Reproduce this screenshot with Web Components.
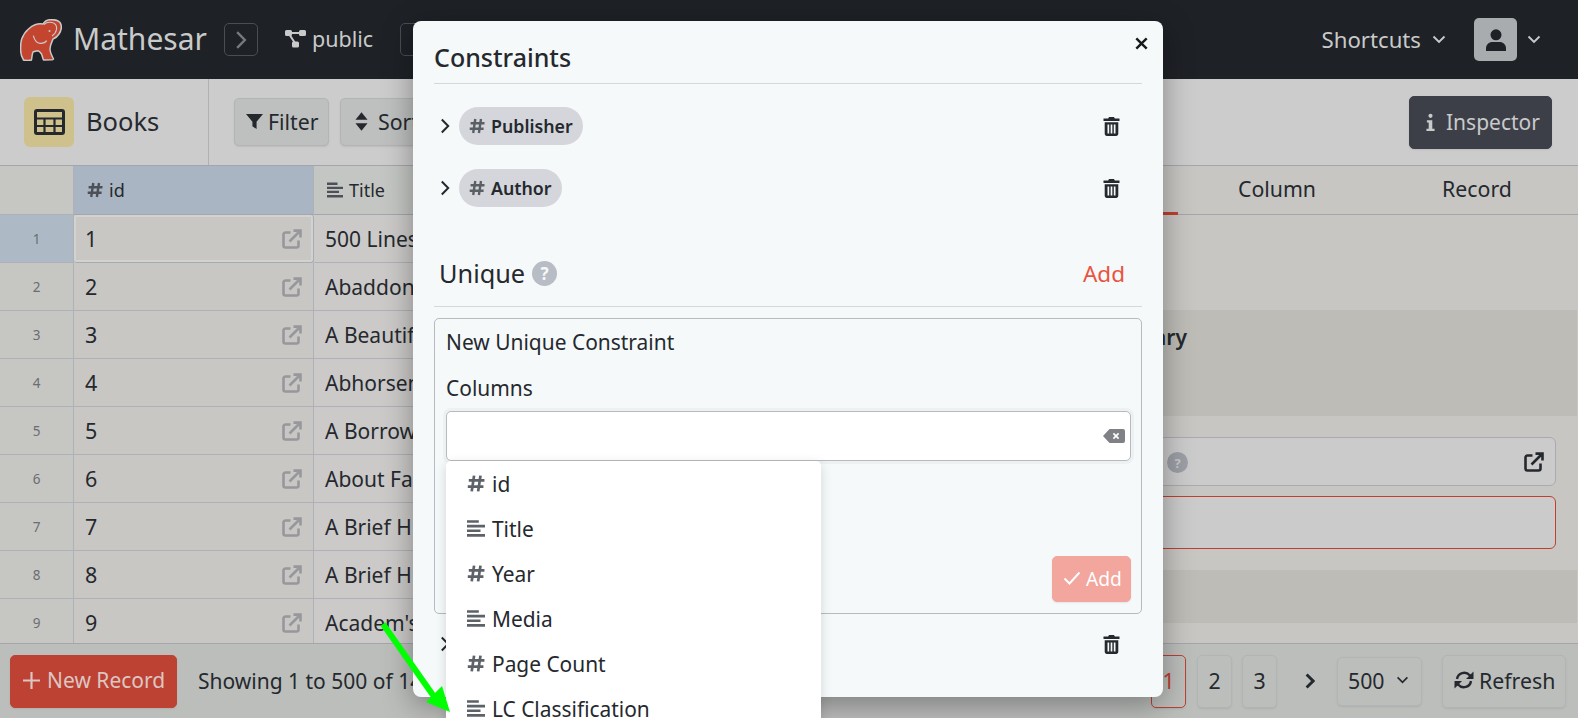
<!DOCTYPE html>
<html><head><meta charset="utf-8"><title>Mathesar</title>
<style>
html,body{margin:0;padding:0;width:1578px;height:718px;overflow:hidden}
body{font-family:"Noto Sans",sans-serif;color:#25292e;position:relative}
m-app{display:flex}
</style></head><body>
<m-app></m-app>
<script>
const ICONS={
hash:['0 0 16 16','<path d="M6.3 1 4.2 15M12 1 9.900 15M1.600 5.200H15.500M.7 10.800h13.900" fill="none" stroke="currentColor" stroke-width="2.400"/>'],
lines:['0 0 16 16','<path d="M0 .6h10.500v2.300H0zM0 4.700h16v2.300H0zM0 8.800h12v2.300H0zM0 12.900h16v2.500H0z" fill="currentColor"/>'],
chevR:['0 0 10 16','<path d="M1.800 1.500 8.200 8l-6.400 6.500" fill="none" stroke="currentColor" stroke-width="2"/>'],
chevB:['0 0 10 16','<path d="M1.600 1.500 8.100 8l-6.500 6.500" fill="none" stroke="currentColor" stroke-width="2.900"/>'],
chevD:['0 0 14 9','<path d="M1.500 1.500 7 7l5.500-5.500" fill="none" stroke="currentColor" stroke-width="1.900"/>'],
trash:['0 0 16 19','<path fill="currentColor" fill-rule="evenodd" d="M5.500 0h5l.8 1.600H16v2.400H0V1.600h4.700zM1.200 5.200h13.600v11.600c0 1.200-.9 2.200-2.100 2.200H3.300c-1.200 0-2.100-1-2.100-2.200zM4 7.500v9h1.700v-9zM7.150 7.500v9h1.700v-9zM10.300 7.500v9H12v-9z"/>'],
ext:['0 0 20 20','<path d="M8.500 3.500H3.400A1.900 1.900 0 0 0 1.500 5.400v11.200a1.900 1.900 0 0 0 1.900 1.900h11.200a1.900 1.900 0 0 0 1.900-1.900v-5" fill="none" stroke="currentColor" stroke-width="2.600"/><path d="M7.500 12.500 17 3M11.500 1.600h7v7" fill="none" stroke="currentColor" stroke-width="2.600"/>'],
filter:['0 0 18 18','<path d="M0 1h18l-6.800 8.200V17L6.800 14V9.200z" fill="currentColor"/>'],
sort:['0 0 14 20','<path d="M7 0l6.500 8H.5zM7 20l6.500-8H.5z" fill="currentColor"/>'],
info:['0 0 10 20','<circle cx="5" cy="2.600" r="2.300" fill="currentColor"/><path d="M1 7.500h6v9.500h2.500v2.500H.5V17H3v-7H1z" fill="currentColor"/>'],
refresh:['0 0 20 20','<path d="M3 9a7.300 7.300 0 0 1 12.700-3.800L18 7.500M17 11a7.300 7.300 0 0 1-12.700 3.800L2 12.500" fill="none" stroke="currentColor" stroke-width="2.400"/><path d="M19.500 1.500v7.500H12zM.5 18.500V11H8z" fill="currentColor"/>'],
back:['0 0 22 14','<path fill="currentColor" fill-rule="evenodd" d="M6.500 0H20a2 2 0 0 1 2 2v10a2 2 0 0 1-2 2H6.500L0 7zM11 3.800 9.800 5l2 2-2 2 1.200 1.200 2-2 2 2 1.200-1.200-2-2 2-2L15 3.800l-2 2z"/>'],
table:['0 0 31 26','<rect x="1.500" y="1.500" width="28" height="23" rx="1.500" fill="none" stroke="currentColor" stroke-width="3"/><path d="M1 9.500h29M1 17h29M10.500 9.500V25M20.500 9.500V25" fill="none" stroke="currentColor" stroke-width="2.200"/>'],
user:['0 0 20 22','<circle cx="10" cy="5.800" r="5.500" fill="currentColor"/><path d="M0 22v-2.500C0 15.500 3 13 6.500 13h7c3.500 0 6.500 2.500 6.500 6.500V22z" fill="currentColor"/>'],
schema:['0 0 21 18','<path d="M0 1.500A1.500 1.500 0 0 1 1.500 0h4A1.500 1.500 0 0 1 7 1.500v3A1.500 1.500 0 0 1 5.500 6h-4A1.500 1.500 0 0 1 0 4.500zM14 1.500A1.500 1.500 0 0 1 15.500 0h4A1.500 1.500 0 0 1 21 1.500v3A1.500 1.500 0 0 1 19.500 6h-4A1.500 1.500 0 0 1 14 4.500zM7 13A1.500 1.500 0 0 1 8.500 11.500h4A1.500 1.500 0 0 1 14 13v3a1.500 1.500 0 0 1-1.500 1.500h-4A1.500 1.500 0 0 1 7 16z" fill="currentColor"/><path d="M5 3h11M4 4l6 9" fill="none" stroke="currentColor" stroke-width="2"/>'],
check:['0 0 18 14','<path d="M1.500 7.500 6.500 12.500 16.500 1.500" fill="none" stroke="currentColor" stroke-width="2"/>'],
plus:['0 0 18 18','<path d="M9 0v18M0 9h18" fill="none" stroke="currentColor" stroke-width="2.300"/>'],
close:['0 0 12 12','<path d="M1.200 1.200 10.800 10.800M10.800 1.200 1.200 10.800" fill="none" stroke="currentColor" stroke-width="2.200"/>']
};
function el(name,html){customElements.define(name,class extends HTMLElement{constructor(){super();this.attachShadow({mode:'open'}).innerHTML=html;}});}
customElements.define('m-icon',class extends HTMLElement{
 constructor(){super();this.attachShadow({mode:'open'});}
 connectedCallback(){const[vb,body]=ICONS[this.getAttribute('name')];const w=this.getAttribute('w')||16,h=this.getAttribute('h')||16;
 this.shadowRoot.innerHTML=`<style>:host{display:inline-flex;flex:none;line-height:0}svg{display:block}</style><svg xmlns="http://www.w3.org/2000/svg" width="${w}" height="${h}" viewBox="${vb}">${body}</svg>`;}
});

el('m-btn',`<style>:host{display:inline-flex;align-items:center;box-sizing:border-box;height:var(--h,48px);border:1px solid var(--b,#b2b4b5);border-radius:5px;background:var(--bg,#bebfbf);color:var(--c,#25292e);padding:0 var(--p,10px) var(--pb,2px);gap:var(--g,5px);font-size:var(--fs,21.300px);box-shadow:0 1px 2px rgba(0,0,0,.08);flex:none;white-space:nowrap}</style><slot></slot>`);

el('m-header',`<style>
:host{display:flex;align-items:center;height:79px;background:#1e2126;color:#c9caca;flex:none;padding:0 37px 0 20px;box-sizing:border-box}
.name{font-size:30px;margin:-2px 0 0 11px;line-height:1}
.box{display:flex;align-items:center;justify-content:center;box-sizing:border-box;width:34px;height:33px;border:1px solid #4a4d52;border-radius:5px;margin-left:17px;color:#77797d}
.sch{display:flex;align-items:center;margin:-2px 0 0 27px;font-size:21.500px;gap:6px}
.box2{width:34px;height:33px;box-sizing:border-box;border:1px solid #4a4d52;border-radius:5px;margin-left:27px}
.sp{flex:1}
.sc{font-size:22.200px;margin-top:0}
.cd{margin-left:11px}
.cd2{margin-left:10px}
.av{width:43px;height:43px;border-radius:5px;background:#a9acaf;color:#1e2126;display:flex;align-items:center;justify-content:center;margin-left:28px}
</style>
<svg width="42" height="42" viewBox="0 0 42 42" xmlns="http://www.w3.org/2000/svg"><path d="M15 5.700C18 4.700 21 4.700 23 5C25 2 27.500.7 30 .7C34 .5 38 .8 40 3.500C42 6.500 41.500 11 39 15C37.500 17.500 35.500 19 33 20C32 23 30 26 30 30C30 33.500 32 37 33.500 40C33.500 41 30 41 23.500 41C22.500 39 22.500 37 21.500 35C20.500 33.500 19.500 32.500 18 31.700C16 32.200 14.500 32.500 13 33C12 35 12 38 11.500 41C10 41.500 5 41.500 3.500 41C1.500 38 .7 35 .7 31.700C.5 27 .7 23 1.700 20C3.500 15.500 5.500 12.500 8.500 10C10.500 8 12.500 6.500 15 5.700Z" fill="#c4452f" stroke="#c9c9c9" stroke-width="1.500" stroke-linejoin="round"/><path d="M24 5.500C26 3.500 29 2.800 32 3.500C35.500 4.300 37 7 36.500 10.500C36 13 34.500 15.500 32 17" fill="none" stroke="#c9c9c9" stroke-width="1.100"/><path d="M13.300 16.700C14.500 21 17 24.300 20 24.300C23 24.500 25.500 23.500 26.700 21.700" fill="none" stroke="#c9c9c9" stroke-width="1.200"/><circle cx="29.500" cy="12" r="1" fill="#c9c9c9"/></svg>
<span class="name">Mathesar</span>
<span class="box"><m-icon name="chevR" w="12" h="20"></m-icon></span>
<span class="sch"><m-icon name="schema" w="21" h="18"></m-icon>public</span>
<span class="box2"></span>
<span class="sp"></span>
<span class="sc">Shortcuts</span><m-icon class="cd" name="chevD" w="14" h="9"></m-icon>
<span class="av"><m-icon name="user" w="20" h="22"></m-icon></span><m-icon class="cd2" name="chevD" w="14" h="9"></m-icon>`);

el('m-toolbar',`<style>
:host{display:flex;align-items:center;height:87px;box-sizing:border-box;background:#cccccc;border-bottom:1px solid #a4a6ab;flex:none;padding-right:26px}
.t{display:flex;align-items:center;width:209px;height:100%;box-sizing:border-box;border-right:1px solid #b0b1b3;padding-left:24px;flex:none}
.tile{width:50px;height:50px;border-radius:6px;background:#cfc18c;color:#25292e;display:flex;align-items:center;justify-content:center}
.n{font-size:25.500px;margin-left:12px;margin-top:-2px}
.bs{display:flex;gap:11px;margin-left:25px}
.f{--p:11px;width:95px}
.s{--p:14px;--g:10px}
.sp{flex:1}
.ins{--bg:#3c3f48;--b:#3c3f48;--c:#c9caca;--h:53px;--p:16px;--g:11px;--fs:21px;--pb:0px;width:143px}
</style>
<div class="t"><span class="tile"><m-icon name="table" w="31" h="26"></m-icon></span><span class="n">Books</span></div>
<div class="bs"><m-btn class="f"><m-icon name="filter" w="17" h="17"></m-icon>Filter</m-btn><m-btn class="s"><m-icon name="sort" w="13" h="19"></m-icon>Sort</m-btn></div>
<span class="sp"></span>
<m-btn class="ins"><m-icon name="info" w="9" h="19"></m-icon>Inspector</m-btn>`);

const titles=['500 Lines','Abaddon','A Beautiful','Abhorsen','A Borrowed','About Face','A Brief H','A Brief H',"Academ's"];
el('m-sheet',`<style>
:host{display:grid;grid-template-columns:74px 240px 1fr;grid-template-rows:49px repeat(9,48px);width:978px;flex:none;background:#c9c8c5;font-size:21.500px;overflow:hidden}
.h{background:#c4c6c4;border-right:1px solid #aeb2b8;border-bottom:1px solid #a4a6ab;display:flex;align-items:center;padding-left:13px;font-size:18px;gap:6px;box-sizing:border-box}
.h.n{padding:0}
.h.id{background:#a9b5c2}
.h m-icon{color:#4d5157}
.n{display:flex;align-items:center;justify-content:center;font-size:13.500px;color:#6a6d73;border-right:1px solid #aeb2b8;border-bottom:1px solid #aeb2b8;box-sizing:border-box;background:#c6c6c3}
.n.sel{background:#adbac5}
.c{display:flex;align-items:center;justify-content:space-between;padding:0 11px 0 11px;box-sizing:border-box;border-right:1px solid #aeb2b8;border-bottom:1px solid #aeb2b8;background:#c9c7c4;min-width:0}
.c.sel{box-shadow:inset 0 0 0 2px #d2d2d0;border-radius:3px;border-color:#a8abb0}
.c m-icon{color:#96989c}
.t{display:flex;align-items:center;padding-left:11px;box-sizing:border-box;border-bottom:1px solid #aeb2b8;background:#cbcac8;font-size:21px;white-space:nowrap}
</style>
<div class="h n"></div><div class="h id"><m-icon name="hash" w="16" h="16"></m-icon>id</div><div class="h"><m-icon name="lines" w="16" h="16"></m-icon>Title</div>
${titles.map((t,i)=>`<div class="n${i?'':' sel'}">${i+1}</div><div class="c${i?'':' sel'}"><span>${i+1}</span><m-icon name="ext" w="20" h="20"></m-icon></div><div class="t">${t}</div>`).join('')}`);

el('m-inspector',`<style>
:host{display:flex;flex-direction:column;width:600px;flex:none;background:#c7c6c3;overflow:hidden;box-sizing:border-box;border-left:1px solid #aeb2b8}
.tabs{display:flex;height:49px;box-sizing:border-box;border-bottom:1px solid #a4a6ab;flex:none}
.tab{width:200px;display:flex;align-items:center;justify-content:center;font-size:21.300px;box-sizing:border-box;padding:0 2px 4px 0}
.tab.on{width:199px;height:49px;padding:0;border-bottom:3px solid #c0402f}
.band{background:#bdbcb7;margin-right:1px;flex:none}
.b1{height:106px;margin-top:95px;padding:13px 390px 0 0;font-size:21px;font-weight:600;box-sizing:border-box;text-align:right}
.f{box-sizing:border-box;margin-right:22px;margin-left:16px;background:#cbcbcb;border:1px solid #a9abaf;border-radius:6px;flex:none;display:flex;align-items:center;justify-content:flex-end}
.f1{height:49px;margin-top:21px;padding-right:11px;position:relative}
.q{position:absolute;left:171px;top:14px;width:21px;height:21px;border-radius:50%;background:#9c9fa6;color:#c9c9c9;font-size:13px;font-weight:700;display:flex;align-items:center;justify-content:center}
.f2{height:53px;margin-top:10px;border-color:#c0402f}
.b2{height:53px;margin-top:21px}
</style>
<div class="tabs"><div class="tab on"></div><div class="tab">Column</div><div class="tab">Record</div></div>
<div class="band b1">Summary</div>
<div class="f f1"><span class="q">?</span><m-icon name="ext" w="20" h="20"></m-icon></div>
<div class="f f2"></div>
<div class="band b2"></div>`);

el('m-footer',`<style>
:host{display:flex;align-items:center;height:75px;box-sizing:border-box;border-top:1px solid #a4a6ab;background:#bcbebc;padding:0 12px 0 10px;font-size:21.300px;flex:none}
m-btn{--bg:transparent;--h:53px}
.new{--bg:#bd4233;--b:#bd4233;--c:#dcc6c2;--p:12px;--g:7px;--fs:21px;width:167px}
.s{margin:0 0 0 21px;font-size:21px;white-space:nowrap}
.sp{flex:1}
.p{--h:53px;--p:0;width:35px;justify-content:center}
.p.on{border-color:#c0402f;color:#c0402f;margin-right:11px}
.p3{margin-left:10px}
.ch{margin:0 22px 0 28px}
.sel{--h:49px;--p:10px;--g:11px;width:85px}
.re{--p:11px;--g:5px;margin-left:20px;width:124px}
</style>
<m-btn class="new"><m-icon name="plus" w="17" h="17"></m-icon>New Record</m-btn><span class="s">Showing 1 to 500 of 14</span>
<span class="sp"></span>
<m-btn class="p on">1</m-btn><m-btn class="p">2</m-btn><m-btn class="p p3">3</m-btn><m-icon class="ch" name="chevB" w="10" h="16"></m-icon>
<m-btn class="sel">500<m-icon name="chevD" w="13" h="8"></m-icon></m-btn>
<m-btn class="re"><m-icon name="refresh" w="20" h="20"></m-icon>Refresh</m-btn>`);

el('m-chip-row',`<style>
:host{display:flex;align-items:center;height:38px;padding:0 22px 0 6px}
.c{color:#25292e;display:flex}
.chip{display:inline-flex;align-items:center;height:38px;border-radius:19px;background:#d4d6db;padding:0 10px 0 10px;gap:6px;margin-left:9px;font-weight:600;font-size:17.800px}
.chip m-icon{color:#5a5f66}
.sp{flex:1}
</style><span class="c"><m-icon name="chevR" w="10" h="16"></m-icon></span><span class="chip"><m-icon name="hash" w="16" h="16"></m-icon><slot></slot></span><span class="sp"></span><m-icon name="trash" w="17" h="19"></m-icon>`);

customElements.define('m-option',class extends HTMLElement{
 constructor(){super();this.attachShadow({mode:'open'});}
 connectedCallback(){this.shadowRoot.innerHTML=`<style>
:host{display:flex;align-items:center;height:45px;padding-left:21px;gap:7px;font-size:20.900px;color:#25292e;white-space:nowrap}
m-icon{color:#5d6168}
</style><m-icon name="${this.getAttribute('icon')}" w="18" h="19"></m-icon><slot></slot>`;}
});

el('m-modal',`<style>
:host{position:absolute;left:413px;top:21px;width:750px;height:676px;background:#f5f9fa;border-radius:8px;box-shadow:0 8px 30px rgba(0,0,0,.35);box-sizing:border-box;padding:0 21px;display:flex;flex-direction:column;z-index:2}
.x{position:absolute;right:15px;top:16px;color:#17191c;display:flex}
h2{margin:0;font-weight:500;font-size:25px;line-height:33px;padding:20px 0 9px;border-bottom:1px solid #d3d8dc}
.rows{display:flex;flex-direction:column;gap:24px;margin-top:23px}
.u{display:flex;align-items:center;height:36px;margin-top:48px;padding:0 17px 15px 5px;border-bottom:1px solid #d3d8dc;font-size:25.300px}
.q{width:25px;height:25px;margin-left:7px;border-radius:50%;background:#b8bcc4;color:#f5f9fa;font-size:17px;font-weight:700;display:flex;align-items:center;justify-content:center}
.sp{flex:1}
.add{color:#e9533f;font-size:22.500px}
.box{position:relative;box-sizing:border-box;margin-top:11px;border:1px solid #b7bbc0;border-radius:5px;padding:10px 10px 11px 11px;height:296px;display:flex;flex-direction:column;font-size:20.950px}
.l{line-height:26px}
.l2{margin-top:20px}
.inp{box-sizing:border-box;margin-top:10px;height:50px;border:1px solid #b7bbc0;border-radius:5px;background:#fff;box-shadow:0 0 0 3px #eef1f2;display:flex;align-items:center;justify-content:flex-end;padding-right:5px;color:#7f8186;flex:none}
.go{margin-top:auto;align-self:flex-end;--bg:#f2a69d;--b:#f2a69d;--c:#fff;--h:46px;--p:10px;--g:5px;--fs:19.200px;width:79px}
.menu{position:absolute;left:11px;top:142px;width:375px;background:#fff;border-radius:5px;box-shadow:0 3px 12px rgba(0,0,0,.14);z-index:3;padding-bottom:40px}
.r3{margin-top:11px}
</style>
<span class="x"><m-icon name="close" w="13" h="13"></m-icon></span>
<h2>Constraints</h2>
<div class="rows"><m-chip-row>Publisher</m-chip-row><m-chip-row>Author</m-chip-row></div>
<div class="u"><span>Unique</span><span class="q">?</span><span class="sp"></span><span class="add">Add</span></div>
<div class="box"><span class="l">New Unique Constraint</span><span class="l l2">Columns</span>
<div class="inp"><m-icon name="back" w="22" h="14"></m-icon></div>
<m-btn class="go"><m-icon name="check" w="18" h="14"></m-icon>Add</m-btn>
<div class="menu">
${[['hash','id'],['lines','Title'],['hash','Year'],['lines','Media'],['hash','Page Count'],['lines','LC Classification']].map(([i,t])=>`<m-option icon="${i}">${t}</m-option>`).join('')}
</div></div>
<m-chip-row class="r3"></m-chip-row>`);

el('m-arrow',`<style>:host{position:absolute;left:375px;top:618px;width:85px;height:100px;z-index:5;pointer-events:none}svg{display:block}</style>
<svg width="85" height="100" xmlns="http://www.w3.org/2000/svg"><path d="M8 6 60 80" stroke="#00ff00" stroke-width="6" fill="none"/><path d="M75 94 51 84 67 68z" fill="#00ff00"/></svg>`);

el('m-app',`<style>
:host{display:flex;flex-direction:column;width:1578px;height:718px;overflow:hidden;position:relative}
.main{display:flex;flex:1;min-height:0}
</style>
<m-header></m-header><m-toolbar></m-toolbar><div class="main"><m-sheet></m-sheet><m-inspector></m-inspector></div><m-footer></m-footer><m-modal></m-modal><m-arrow></m-arrow>`);
</script>
</body></html>
